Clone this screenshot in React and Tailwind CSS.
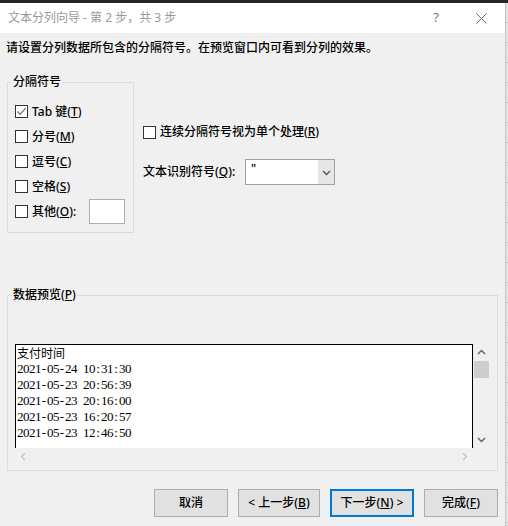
import React from 'react';

const rows = [
  { label: 'Tab 键', key: 'T', checked: true },
  { label: '分号', key: 'M' },
  { label: '逗号', key: 'C' },
  { label: '空格', key: 'S' },
];

const preview = [
  '2021-05-24 10:31:30',
  '2021-05-23 20:56:39',
  '2021-05-23 20:16:00',
  '2021-05-23 16:20:57',
  '2021-05-23 12:46:50',
];

function Check({ checked }) {
  return (
    <span className="w-[13px] h-[13px] border border-[#333] bg-white flex items-center justify-center shrink-0">
      {checked && (
        <svg width="11" height="11" viewBox="0 0 11 11">
          <path d="M1.5 5.5 L4.2 8.3 L9.6 2.2" fill="none" stroke="#6b6b6b" strokeWidth="1.2" />
        </svg>
      )}
    </span>
  );
}

function Mono({ text }) {
  return (
    <div className="h-[16px] leading-[16px] font-['Liberation_Serif',serif] text-[13px] text-black whitespace-nowrap">
      {text.split('').map((c, i) => (
        <span key={i} className="inline-block w-[6px] text-center">{c === ' ' ? '\u00a0' : c}</span>
      ))}
    </div>
  );
}

function Chevron({ d, color = '#606060' }) {
  return (
    <svg width="9" height="9" viewBox="0 0 9 9">
      <path d={d} fill="none" stroke={color} strokeWidth="1.4" />
    </svg>
  );
}

function Btn({ children, w, primary }) {
  return (
    <button
      className={`h-[28px] ${w} bg-[#e1e1e1] text-[12px] text-black flex items-center justify-center ${
        primary ? 'border-2 border-[#0078d7]' : 'border border-[#adadad]'
      }`}
    >
      {children}
    </button>
  );
}

export default function App() {
  return (
    <div className="w-[508px] h-[526px] overflow-hidden flex flex-col bg-[#f0f0f0] font-['Noto_Sans','Noto_Sans_CJK_SC',sans-serif] text-[12px] text-black">
      <div className="h-[3px] bg-[#262626] shrink-0" />
      <div className="flex flex-1">
        <div className="w-[505px] flex flex-col">
          {/* title bar */}
          <div className="h-[30px] bg-white flex items-center pl-[8px] text-[#9a9a9a] text-[12px]">
            <span>文本分列向导 - 第 2 步，共 3 步</span>
            <span className="ml-auto mr-[37px] text-[#7a7a7a] text-[13px]">?</span>
            <svg className="mr-[18px]" width="11" height="11" viewBox="0 0 11 11">
              <path d="M0.5 0.5 L10.5 10.5 M10.5 0.5 L0.5 10.5" stroke="#666" strokeWidth="1" />
            </svg>
          </div>

          <p className="pt-[7px] pl-[6px] leading-[16px] font-medium">请设置分列数据所包含的分隔符号。在预览窗口内可看到分列的效果。</p>

          <div className="flex items-start mt-[18px] font-medium">
            <fieldset className="ml-[7px] w-[127px] border border-[#dcdcdc] pl-[7px] pr-[8px] pt-[9px] pb-[8px]">
              <legend className="-ml-[3px] px-[1px] leading-[16px]">分隔符号</legend>
              {rows.map(r => (
                <div key={r.key} className="h-[25px] flex items-center gap-[4px]">
                  <Check checked={r.checked} />
                  <span className="leading-[16px]">
                    {r.label}(<u>{r.key}</u>)
                  </span>
                </div>
              ))}
              <div className="h-[25px] flex items-center gap-[4px]">
                <Check />
                <span className="leading-[16px]">
                  其他(<u>O</u>):
                </span>
                <span className="ml-auto w-[36px] h-[25px] bg-white border border-[#adadad]" />
              </div>
            </fieldset>

            <div className="ml-[9px] pt-[50px]">
              <div className="h-[16px] flex items-center gap-[4px]">
                <Check />
                <span className="leading-[16px]">
                  连续分隔符号视为单个处理(<u>R</u>)
                </span>
              </div>
              <div className="mt-[19px] flex items-center">
                <span className="w-[102px] leading-[16px]">
                  文本识别符号(<u>Q</u>):
                </span>
                <div className="w-[90px] h-[26px] bg-white border border-[#a0a0a0] flex">
                  <span className="flex-1 pl-[5px] leading-[16px] pt-[1px]">"</span>
                  <span className="w-[16px] bg-[#e5e5e5] flex items-center justify-center">
                    <Chevron d="M1 3 L4.5 6.5 L8 3" color="#555" />
                  </span>
                </div>
              </div>
            </div>
          </div>

          <fieldset className="mt-[54px] ml-[7px] w-[491px] border border-[#dcdcdc] pl-[7px] pt-[41px] pb-[5px]">
            <legend className="-ml-[3px] px-[1px] leading-[16px] font-medium">
              数据预览(<u>P</u>)
            </legend>
            <div className="flex">
              <div className="w-[458px] h-[104px] bg-white border-l border-t border-r border-black pl-[1px]">
                <div className="h-[16px] leading-[16px] font-['Noto_Sans_CJK_SC',sans-serif]">支付时间</div>
                {preview.map(t => (
                  <Mono key={t} text={t} />
                ))}
              </div>
              <div className="w-[17px] h-[104px] flex flex-col items-center">
                <div className="h-[17px] flex items-center justify-center">
                  <Chevron d="M1 6 L4.5 2.5 L8 6" />
                </div>
                <div className="w-[15px] h-[17px] bg-[#cdcdcd]" />
                <div className="flex-1" />
                <div className="h-[17px] flex items-center justify-center">
                  <Chevron d="M1 3 L4.5 6.5 L8 3" />
                </div>
              </div>
            </div>
            <div className="w-[458px] h-[17px] flex items-center justify-between px-[4px]">
              <Chevron d="M6 1 L2.5 4.5 L6 8" color="#c4c4c4" />
              <Chevron d="M3 1 L6.5 4.5 L3 8" color="#c4c4c4" />
            </div>
          </fieldset>

          <div className="mt-[18px] pr-[7px] flex justify-end gap-[10px] font-medium">
            <Btn w="w-[74px]">取消</Btn>
            <Btn w="w-[82px]">
              &lt; 上一步(<u>B</u>)
            </Btn>
            <Btn w="w-[84px]" primary>
              下一步(<u>N</u>) &gt;
            </Btn>
            <Btn w="w-[74px]">
              完成(<u>F</u>)
            </Btn>
          </div>
        </div>

        <div className="w-[3px] border-l border-[#c6c6c6] bg-[#e3e3e3] flex flex-col">
          {Array.from({ length: 27 }).map((_, i) => (
            <div key={i} className="h-[20px] shrink-0 border-b border-[#c8c8c8]" />
          ))}
        </div>
      </div>
    </div>
  );
}
